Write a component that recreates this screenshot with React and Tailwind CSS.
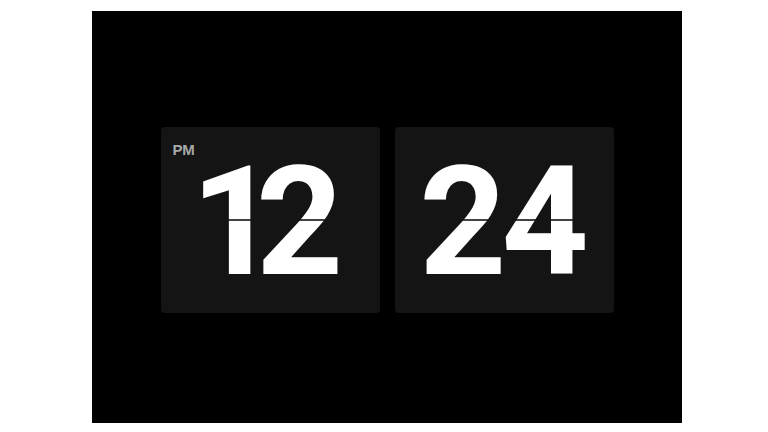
import React from "react";

const FlipCard = ({ digits, pull, shift = 0, label }) => {
    return (
        <div className="relative w-[219px] h-[186px] rounded-[4px] bg-[#141414] flex items-center justify-center overflow-hidden">
            {label && (
                <span className="absolute left-[12px] top-[15px] font-['Liberation_Sans',Arial,sans-serif] text-[15px] font-bold text-[#a8a8a8] tracking-tight leading-none">
                    {label}
                </span>
            )}
            <div className="flex items-start mt-[6px] text-[152px] font-bold text-white leading-[0.72]" style={{ marginLeft: `${shift}px` }}>
                <span>{digits[0]}</span>
                <span style={{ marginLeft: `${pull}px` }}>{digits[1]}</span>
            </div>
            <div className="absolute left-0 right-0 top-[92px] h-[2px] bg-[#141414]/80" />
        </div>
    );
};

export default function App() {
    return (
        <div className="w-[768px] h-[432px] bg-white pt-[11px] pl-[92px] font-['Roboto',Arial,sans-serif]">
            <div className="w-[590px] h-[412px] bg-black flex items-center justify-center gap-[15px] pt-[6px]">
                <FlipCard digits="12" pull={-22} shift={-6} label="PM" />
                <FlipCard digits="24" pull={-5} />
            </div>
        </div>
    );
}
